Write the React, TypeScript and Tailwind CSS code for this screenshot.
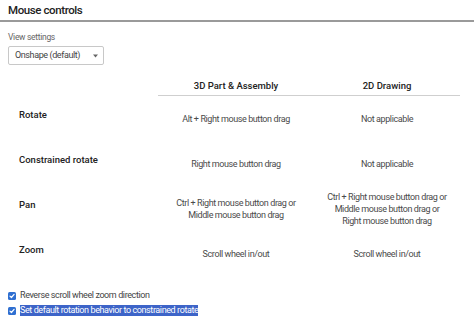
import React from 'react';

const ROWS: { label: string; part: string[]; drawing: string[] }[] = [
  { label: 'Rotate', part: ['Alt + Right mouse button drag'], drawing: ['Not applicable'] },
  { label: 'Constrained rotate', part: ['Right mouse button drag'], drawing: ['Not applicable'] },
  {
    label: 'Pan',
    part: ['Ctrl + Right mouse button drag or', 'Middle mouse button drag'],
    drawing: ['Ctrl + Right mouse button drag or', 'Middle mouse button drag or', 'Right mouse button drag'],
  },
  { label: 'Zoom', part: ['Scroll wheel in/out'], drawing: ['Scroll wheel in/out'] },
];

const Check = () => (
  <span className="w-[8px] h-[8px] rounded-[1.5px] bg-[#2f6fd1] flex items-center justify-center shrink-0">
    <svg width="6" height="6" viewBox="0 0 8 8" fill="none">
      <path d="M1.3 4.2 L3.2 6 L6.8 1.8" stroke="white" strokeWidth="1.6" strokeLinecap="round" strokeLinejoin="round" />
    </svg>
  </span>
);

export default function App() {
  return (
    <div className="w-[474px] h-[322px] bg-white overflow-hidden text-[#333]" style={{ fontFamily: 'Roboto, "Noto Sans", sans-serif' }}>
      <div className="px-2 pt-[3px] pb-[2px] border-b-2 border-[#9a9a9a]">
        <h1 className="text-[11.5px] font-medium tracking-[-0.4px] text-[#222] leading-[15px]">Mouse controls</h1>
      </div>

      <div className="px-2 pt-[9px]">
        <div className="text-[8.5px] tracking-[-0.3px] text-[#666] leading-[12px]">View settings</div>
        <div className="mt-[3px] w-[96px] h-[19px] border border-[#c8c8c8] rounded-[2px] flex items-center justify-between pl-[6px] pr-[5px]">
          <span className="text-[9px] tracking-[-0.4px] text-[#444]">Onshape (default)</span>
          <svg width="5" height="4" viewBox="0 0 5 4">
            <path d="M0 0.5 H5 L2.5 3.5 Z" fill="#666" />
          </svg>
        </div>
      </div>

      <div className="mt-[14px] flex">
        <div className="w-[158px]" />
        <div className="w-[302px] flex border-b border-[#cfcfcf] pb-[2px]">
          <div className="w-[156px] text-center text-[9.5px] font-medium text-[#222] leading-[14px]">3D Part &amp; Assembly</div>
          <div className="w-[146px] text-center text-[9.5px] font-medium text-[#222] leading-[14px]">2D Drawing</div>
        </div>
      </div>

      <div className="flex flex-col">
        {ROWS.map((r) => (
          <div key={r.label} className="h-[45px] flex items-center">
            <div className="w-[158px] pl-[19px] text-[9.5px] font-medium text-[#222] -mt-[6px]">{r.label}</div>
            <div className="w-[156px] text-center text-[9px] tracking-[-0.4px] text-[#4a4a4a] leading-[12px]">
              {r.part.map((l) => (
                <div key={l}>{l}</div>
              ))}
            </div>
            <div className="w-[146px] text-center text-[9px] tracking-[-0.4px] text-[#4a4a4a] leading-[12px]">
              {r.drawing.map((l) => (
                <div key={l}>{l}</div>
              ))}
            </div>
          </div>
        ))}
      </div>

      <div className="px-2 mt-[14px] flex flex-col gap-[4px] text-[9px] tracking-[-0.4px] leading-[11px]">
        <label className="flex items-center gap-[4px]">
          <Check />
          <span className="text-[#444]">Reverse scroll wheel zoom direction</span>
        </label>
        <label className="flex items-center gap-[4px]">
          <Check />
          <span className="bg-[#3d64c8] text-white">Set default rotation behavior to constrained rotate</span>
        </label>
      </div>
    </div>
  );
}
